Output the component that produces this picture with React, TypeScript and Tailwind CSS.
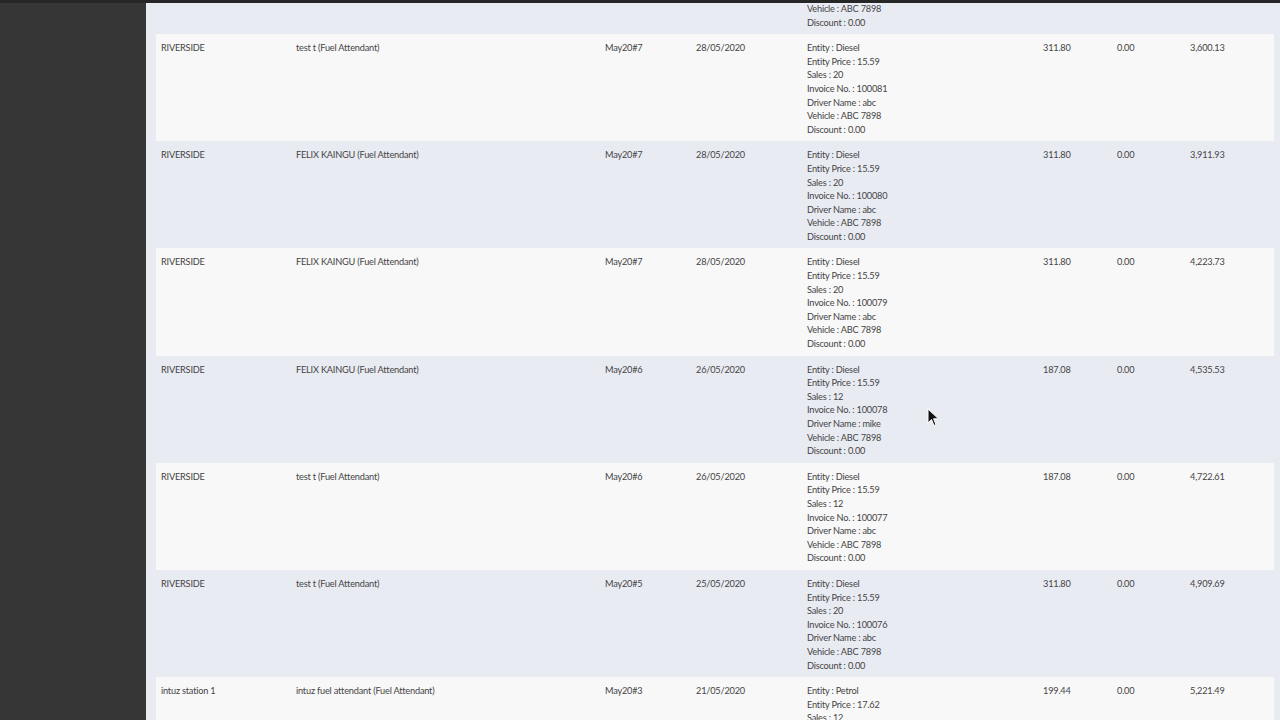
import React from 'react';

type Row = {
  station: string;
  attendant: string;
  shift: string;
  date: string;
  entity: string;
  price: string;
  sales: string;
  invoice: string;
  driver: string;
  amount: string;
  discount: string;
  balance: string;
};

const rows: Row[] = [
  { station: 'RIVERSIDE', attendant: 'test t (Fuel Attendant)', shift: 'May20#7', date: '28/05/2020', entity: 'Diesel', price: '15.59', sales: '20', invoice: '100082', driver: 'abc', amount: '311.80', discount: '0.00', balance: '3,288.33' },
  { station: 'RIVERSIDE', attendant: 'test t (Fuel Attendant)', shift: 'May20#7', date: '28/05/2020', entity: 'Diesel', price: '15.59', sales: '20', invoice: '100081', driver: 'abc', amount: '311.80', discount: '0.00', balance: '3,600.13' },
  { station: 'RIVERSIDE', attendant: 'FELIX KAINGU (Fuel Attendant)', shift: 'May20#7', date: '28/05/2020', entity: 'Diesel', price: '15.59', sales: '20', invoice: '100080', driver: 'abc', amount: '311.80', discount: '0.00', balance: '3,911.93' },
  { station: 'RIVERSIDE', attendant: 'FELIX KAINGU (Fuel Attendant)', shift: 'May20#7', date: '28/05/2020', entity: 'Diesel', price: '15.59', sales: '20', invoice: '100079', driver: 'abc', amount: '311.80', discount: '0.00', balance: '4,223.73' },
  { station: 'RIVERSIDE', attendant: 'FELIX KAINGU (Fuel Attendant)', shift: 'May20#6', date: '26/05/2020', entity: 'Diesel', price: '15.59', sales: '12', invoice: '100078', driver: 'mike', amount: '187.08', discount: '0.00', balance: '4,535.53' },
  { station: 'RIVERSIDE', attendant: 'test t (Fuel Attendant)', shift: 'May20#6', date: '26/05/2020', entity: 'Diesel', price: '15.59', sales: '12', invoice: '100077', driver: 'abc', amount: '187.08', discount: '0.00', balance: '4,722.61' },
  { station: 'RIVERSIDE', attendant: 'test t (Fuel Attendant)', shift: 'May20#5', date: '25/05/2020', entity: 'Diesel', price: '15.59', sales: '20', invoice: '100076', driver: 'abc', amount: '311.80', discount: '0.00', balance: '4,909.69' },
  { station: 'intuz station 1', attendant: 'intuz fuel attendant (Fuel Attendant)', shift: 'May20#3', date: '21/05/2020', entity: 'Petrol', price: '17.62', sales: '12', invoice: '100075', driver: 'abc', amount: '199.44', discount: '0.00', balance: '5,221.49' },
];

function Cursor() {
  return (
    <svg className="absolute left-[927px] top-[408px]" width="13" height="19" viewBox="0 0 13 19">
      <path d="M1 1 L1 15 L4.5 11.5 L7 17.5 L9 16.6 L6.6 10.8 L11.5 10.8 Z" fill="#111" stroke="#fff" strokeWidth="1" />
    </svg>
  );
}

export default function App() {
  return (
    <div className="relative w-[1280px] h-[720px] overflow-hidden bg-[#363636] text-[#444]" style={{ fontFamily: 'Lato, "Open Sans", sans-serif' }}>
      <div className="flex h-full">
        <div className="w-[146px] shrink-0 bg-[#363636]" />
        <div className="flex-1 bg-[#e9ebf3] pl-[10px] pr-[6px] overflow-hidden">
          <table className="w-[1118px] border-collapse text-[9.2px] tracking-[-0.2px] leading-[13.6px] -mt-[73px]">
            <colgroup>
              <col className="w-[135px]" />
              <col className="w-[309px]" />
              <col className="w-[91px]" />
              <col className="w-[111px]" />
              <col className="w-[236px]" />
              <col className="w-[74px]" />
              <col className="w-[73px]" />
              <col className="w-[89px]" />
            </colgroup>
            <tbody>
              {rows.map((r, i) => (
                <tr key={i} className={i % 2 === 0 ? 'bg-[#e9ebf3]' : 'bg-[#f8f8f8]'}>
                  <td className="align-top px-[5px] pt-[7px] pb-[5px]">{r.station}</td>
                  <td className="align-top px-[5px] pt-[7px] pb-[5px]">{r.attendant}</td>
                  <td className="align-top px-[5px] pt-[7px] pb-[5px]">{r.shift}</td>
                  <td className="align-top px-[5px] pt-[7px] pb-[5px]">{r.date}</td>
                  <td className="align-top px-[5px] pt-[7px] pb-[5px]">
                    <div>Entity : {r.entity}</div>
                    <div>Entity Price : {r.price}</div>
                    <div>Sales : {r.sales}</div>
                    <div>Invoice No. : {r.invoice}</div>
                    <div>Driver Name : {r.driver}</div>
                    <div>Vehicle : ABC 7898</div>
                    <div>Discount : {r.discount}</div>
                  </td>
                  <td className="align-top px-[5px] pt-[7px] pb-[5px]">{r.amount}</td>
                  <td className="align-top px-[5px] pt-[7px] pb-[5px]">{r.discount}</td>
                  <td className="align-top px-[5px] pt-[7px] pb-[5px]">{r.balance}</td>
                </tr>
              ))}
            </tbody>
          </table>
        </div>
      </div>
      <div className="absolute top-0 left-0 right-0 h-[3px] bg-[#262626]" />
      <Cursor />
    </div>
  );
}
